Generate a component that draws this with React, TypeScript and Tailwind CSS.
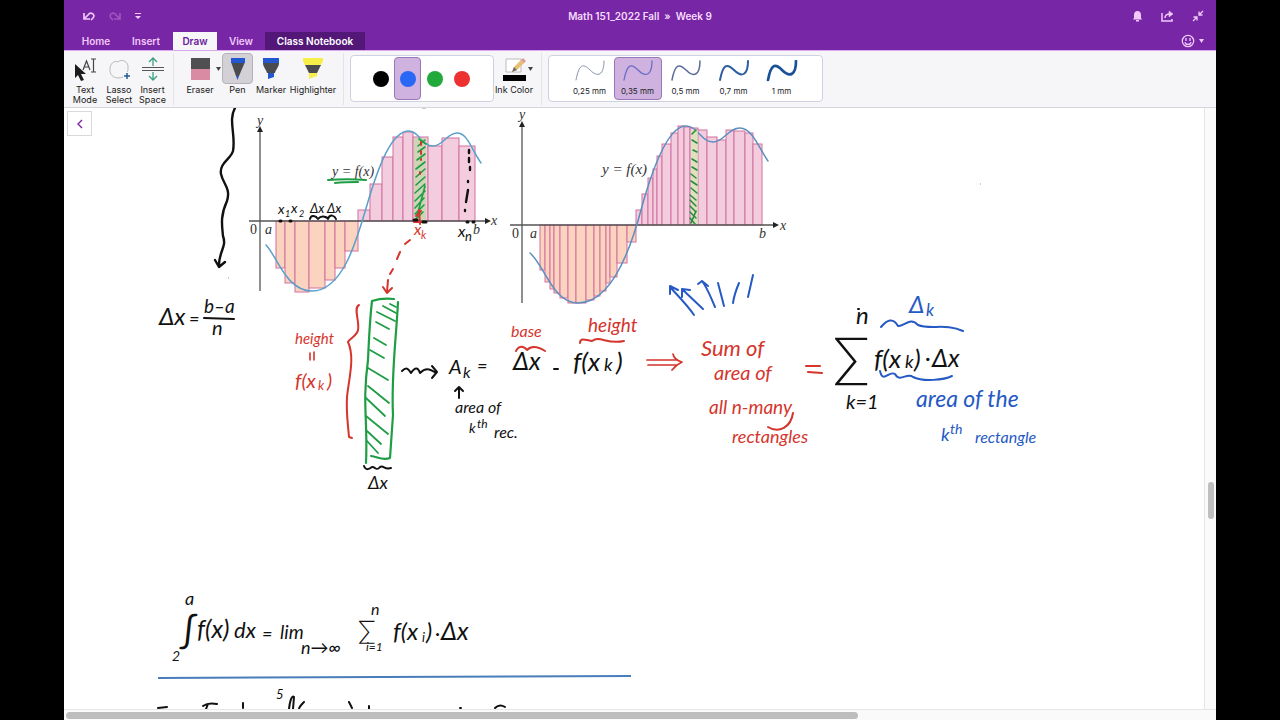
import { clsx } from "clsx";
import type { ReactNode } from "react";

const INK = { black: "#111111", red: "#d5352c", blue: "#2559c4", green: "#1f9d45" };

type Bar = [number, number, number];

// x start, x end, height at the sample point
const coarseBars: Bar[] = [
  [276, 285, 268], [285, 295, 283], [295, 309, 292], [309, 325, 288],
  [325, 335, 280], [335, 345, 268], [345, 358, 251], [358, 370, 210],
  [370, 382, 184], [382, 393, 157], [393, 403, 137], [403, 413, 132],
  [413, 428, 137], [428, 442, 146], [442, 459, 138], [459, 475, 146],
];

const fineBars: Bar[] = [
  [540, 545, 270], [545, 550, 282], [550, 554, 289], [554, 560, 293],
  [560, 568, 298], [568, 576, 303], [576, 586, 303], [586, 594, 300],
  [594, 600, 296], [600, 606, 291], [606, 610, 283], [610, 617, 277],
  [617, 627, 263], [627, 636, 242], [636, 642, 210], [642, 648, 194],
  [648, 653, 178], [653, 657, 169], [657, 662, 156], [662, 671, 144],
  [671, 678, 133], [678, 684, 126], [684, 690, 127], [690, 698, 128],
  [698, 707, 130], [707, 717, 137], [717, 726, 140], [726, 734, 130],
  [734, 745, 131], [745, 753, 133], [753, 762, 144],
];

const Bars = ({ bars, axis }: { bars: Bar[]; axis: number }) => (
  <g stroke="#d2709f" strokeWidth="1">
    {bars.map(([x1, x2, y]) => (
      <rect
        key={x1}
        x={x1}
        y={Math.min(y, axis)}
        width={x2 - x1}
        height={Math.abs(y - axis)}
        fill={y > axis ? "#fbd3bf" : "#f3cdde"}
      />
    ))}
  </g>
);

type HandProps = { x: number; y: number; size: number; color?: string; children: ReactNode };

const Hand = ({ x, y, size, color = INK.black, children }: HandProps) => (
  <text x={x} y={y} fontSize={size} fill={color} className="font-['Lato',sans-serif] italic">
    {children}
  </text>
);

const Label = ({ x, y, children }: { x: number; y: number; children: ReactNode }) => (
  <text x={x} y={y} fontSize="14" fill="#333" className="font-['Liberation_Serif',serif] italic">
    {children}
  </text>
);

const Stroke = ({ d, color = INK.black, width = 2 }: { d: string; color?: string; width?: number }) => (
  <path d={d} stroke={color} strokeWidth={width} fill="none" strokeLinecap="round" strokeLinejoin="round" />
);

const CoarseChart = () => (
  <g>
    <Bars bars={coarseBars} axis={221} />
    <path d="M260 291V128M249 221H488" stroke="#555" strokeWidth="1.3" />
    <path d="M260 126l-3 6h6zM491 221l-6-3v6z" fill="#222" />
    <Stroke d="M266 245C277 256 286 291 312 291C342 291 356 243 367 205C379 164 392 131 409 131C419 131 422 146 433 146C443 146 447 133 457 133C468 133 472 151 481 163" color="#5a9fca" width={1.5} />
    <Label x={257} y={125}>y</Label>
    <Label x={250} y={234}><tspan fontStyle="normal">0</tspan></Label>
    <Label x={265} y={234}>a</Label>
    <Label x={473} y={234}>b</Label>
    <Label x={491} y={225}>x</Label>
    <Label x={332} y={176}>y = f(x)</Label>
    <Stroke d="M328 180C341 179 353 179 366 180M335 183C344 182 351 182 358 182" color={INK.green} />
    <rect x="414" y="138" width="12" height="82" fill="#bcd8a5" opacity="0.7" />
    <Stroke d="M425 140l-7 6M425 147l-7 5M425 154l-8 6M425 162l-9 7M425 169l-9 8M425 177l-9 8M425 184l-10 9M425 191l-10 10M424 198l-9 10M424 205l-9 9M423 212l-7 7M419 139l7 5M425 186l-8 30" color={INK.green} width={1.6} />
    <Stroke d="M421 142v3M421 151v3M421 159v1M420 172v2M419 210l1 14M416 216l5 -5M414 222h9" color={INK.red} />
    <Stroke d="M469 150v3M469 158v4M470 167v3M468 181v1M468 190l-2 12M465 210v1" width={2.4} />
    <Stroke d="M280 221h1M290 221h1M414 220h3M423 222h3M467 222h1M473 222h1" width={3} />
    <Stroke d="M310 219C311 214 316 216 318 219C322 214 328 218 328 219C330 213 335 216 336 219" />
    <Hand x={278} y={214} size={14}>x</Hand>
    <Hand x={285} y={217} size={9}>1</Hand>
    <Hand x={291} y={213} size={14}>x</Hand>
    <Hand x={299} y={217} size={9}>2</Hand>
    <Hand x={310} y={213} size={13}>Δx</Hand>
    <Hand x={327} y={213} size={13}>Δx</Hand>
    <Hand x={458} y={237} size={16}>x</Hand>
    <Hand x={465} y={241} size={13}>n</Hand>
    <Hand x={414} y={235} size={16} color={INK.red}>x</Hand>
    <Hand x={421} y={239} size={11} color={INK.red}>k</Hand>
    <Stroke d="M410 240l-5 4M400 252l-3 7M393 269l-3 5M388 280l-1 12M383 287l4 6l5 -5" color={INK.red} />
  </g>
);

const FineChart = () => (
  <g>
    <Bars bars={fineBars} axis={225} />
    <path d="M522 303V124M510 225H776" stroke="#555" strokeWidth="1.3" />
    <path d="M522 121l-3 6h6zM779 225l-6-3v6z" fill="#222" />
    <Stroke d="M530 253C545 266 553 303 578 303C610 303 629 255 641 210C652 170 668 126 686 126C698 126 701 142 713 142C724 142 728 128 740 128C752 128 759 148 768 161" color="#5a8fc0" width={1.5} />
    <Label x={519} y={119}>y</Label>
    <Label x={512} y={238}><tspan fontStyle="normal">0</tspan></Label>
    <Label x={530} y={238}>a</Label>
    <Label x={759} y={238}>b</Label>
    <Label x={780} y={230}>x</Label>
    <text x="602" y="174" fontSize="15" fill="#333" className="font-['Liberation_Serif',serif] italic">y = f(x)</text>
    <rect x="691" y="130" width="7" height="94" fill="#d7e6b8" opacity="0.8" />
    <Stroke d="M696 130l-4 4M692 140l5 3M693 150l4 2M692 159l5 3M692 167l5 3M691 174l5 4M691 181l6 4M691 188l6 5M690 195l6 5M690 200l6 6M690 206l6 6M690 212l6 6M690 218l5 6M696 211l-5 12" color="#2a8b41" width={1.6} />
  </g>
);

const RectangleNotes = () => (
  <g>
    <Stroke d="M235 108C228 120 236 135 233 151C231 159 219 163 221 174C223 184 231 188 227 201C220 216 222 226 223 236C227 247 219 251 219 265M215 260l4 7l6 -5" width={2.4} />

    <Hand x={159} y={325} size={24}>Δx</Hand>
    <Hand x={189} y={325} size={18}>=</Hand>
    <Hand x={204} y={313} size={19}>b–a</Hand>
    <Hand x={212} y={335} size={20}>n</Hand>
    <Stroke d="M204 318L234 319" />

    <Hand x={295} y={344} size={15} color={INK.red}>height</Hand>
    <Stroke d="M310 353v7M314 352v8" color={INK.red} width={1.6} />
    <Hand x={295} y={388} size={20} color={INK.red}>f(x</Hand>
    <Hand x={318} y={390} size={13} color={INK.red}>k</Hand>
    <Hand x={327} y={388} size={20} color={INK.red}>)</Hand>
    <Stroke d="M359 305C353 308 360 322 358 330C357 336 350 338 348 342C355 357 349 378 347 397C346 413 348 424 349 437L352 438" color={INK.red} />

    <Stroke d="M366 463C368 420 362 405 368 360C369 337 370 318 372 301C378 299 386 298 394 299M398 302C396 341 391 377 393 415L390 458C383 461 378 457 371 456" color={INK.green} width={2.2} />
    <Stroke d="M390 304l6 3M383 306l13 7M377 312l18 9M376 322l13 7M374 338l12 7M370 350l14 8M368 368l20 12M368 386l21 17M366 398l19 18M366 416l22 18M367 431l14 13M367 441l11 12" color={INK.green} width={1.8} />
    <Stroke d="M364 466C366 471 369 469 372 467C375 466 376 472 380 467C384 465 384 470 391 468" />
    <Hand x={368} y={489} size={18}>Δx</Hand>

    <Stroke d="M402 371C406 367 408 368 411 373C415 367 418 367 420 373C425 368 429 368 436 373M432 366l5 6l-5 6" />
    <Hand x={449} y={374} size={20}>A</Hand>
    <Hand x={463} y={378} size={16}>k</Hand>
    <Hand x={477} y={372} size={18}>=</Hand>
    <Stroke d="M459 398V388M455 391l4 -4l4 4" />
    <Hand x={455} y={413} size={16}>area of</Hand>
    <Hand x={469} y={433} size={14}>k</Hand>
    <Hand x={477} y={428} size={12}>th</Hand>
    <Hand x={494} y={438} size={16}>rec.</Hand>

    <Hand x={511} y={337} size={16} color={INK.red}>base</Hand>
    <Stroke d="M516 351C519 345 524 346 527 350C531 346 537 346 545 351" color={INK.red} />
    <Hand x={513} y={370} size={25}>Δx</Hand>
    <Stroke d="M554 369h4" />
    <Hand x={588} y={332} size={19} color={INK.red}>height</Hand>
    <Stroke d="M580 343C580 337 586 340 592 341C600 335 607 345 624 341" color={INK.red} />
    <Hand x={573} y={371} size={26}>f(x</Hand>
    <Hand x={604} y={371} size={18}>k</Hand>
    <Hand x={616} y={371} size={26}>)</Hand>
    <Stroke d="M647 360H677M648 365H677M673 354C674 359 678 361 682 362C678 364 675 366 672 370" color={INK.red} width={1.7} />
  </g>
);

const SumNotes = () => (
  <g>
    <Stroke d="M694 315C688 306 680 298 670 287M670 294V286L678 290M703 309L683 290M682 297V289L690 290M715 307C711 298 708 289 702 281M698 284L702 281L708 286M724 306L718 283M733 303C734 296 736 290 739 283M748 297L753 275" color={INK.blue} />

    <Hand x={701} y={356} size={22} color={INK.red}>Sum of</Hand>
    <Hand x={714} y={380} size={20} color={INK.red}>area of</Hand>
    <Hand x={709} y={414} size={19} color={INK.red}>all n-many</Hand>
    <Hand x={732} y={443} size={18} color={INK.red}>rectangles</Hand>
    <Stroke d="M793 413C791 427 779 434 768 427" color={INK.red} />
    <Stroke d="M806 366L820 366M808 372L822 373" color={INK.red} />

    <Hand x={856} y={324} size={24}>n</Hand>
    <Stroke d="M858 309h1" />
    <text x="833" y="376" fontSize="54" fill={INK.black} className="font-['Lato',sans-serif] font-light">∑</text>
    <Hand x={846} y={409} size={20}>k=1</Hand>
    <Hand x={874} y={368} size={26}>f(x</Hand>
    <Hand x={905} y={368} size={18}>k</Hand>
    <Hand x={914} y={368} size={26}>)</Hand>
    <Hand x={925} y={366} size={22}>·</Hand>
    <Hand x={932} y={367} size={25}>Δx</Hand>
    <Hand x={909} y={313} size={24} color={INK.blue}>Δ</Hand>
    <Hand x={926} y={316} size={17} color={INK.blue}>k</Hand>
    <Stroke d="M881 327C887 320 893 317 898 326C904 327 910 316 918 325C930 330 946 323 963 331M880 371C883 384 889 370 895 374C900 383 907 372 913 377C923 382 944 380 952 376" color={INK.blue} />
    <Hand x={916} y={407} size={23} color={INK.blue}>area of the</Hand>
    <Hand x={941} y={441} size={18} color={INK.blue}>k</Hand>
    <Hand x={950} y={434} size={14} color={INK.blue}>th</Hand>
    <Hand x={975} y={443} size={16} color={INK.blue}>rectangle</Hand>
  </g>
);

const IntegralNotes = () => (
  <g>
    <Hand x={185} y={605} size={18}>a</Hand>
    <Hand x={172} y={661} size={14}>2</Hand>
    <Hand x={181} y={643} size={36}>∫</Hand>
    <Hand x={197} y={638} size={25}>f(x)</Hand>
    <Hand x={234} y={638} size={22}>dx</Hand>
    <Hand x={262} y={640} size={18}>=</Hand>
    <Hand x={280} y={639} size={19}>lim</Hand>
    <Hand x={301} y={654} size={18}>n→∞</Hand>
    <Hand x={371} y={615} size={16}>n</Hand>
    <text x="358" y="639" fontSize="26" fill={INK.black} className="font-['Lato',sans-serif] font-light">∑</text>
    <Hand x={366} y={651} size={12}>i=1</Hand>
    <Hand x={393} y={640} size={24}>f(x</Hand>
    <Hand x={422} y={642} size={13}>i</Hand>
    <Hand x={426} y={640} size={24}>)</Hand>
    <Hand x={435} y={640} size={20}>·</Hand>
    <Hand x={441} y={640} size={25}>Δx</Hand>
    <path d="M158 678L631 676" stroke="#4a7dbb" strokeWidth="2" />
    <Hand x={276} y={699} size={13}>5</Hand>
    <Stroke d="M158 708l9 -1M203 706C207 703 212 703 217 704M206 709l2 -5M243 703v5M289 709C290 700 292 695 294 697L293 709M304 702C301 705 299 707 299 709M349 702L352 708M369 706v3M460 708h1M495 708C498 705 502 705 505 707" />
  </g>
);

const tabs = [
  { name: "Home", className: "w-[44px]" },
  { name: "Insert", className: "ml-1.5 w-[44px]" },
  { name: "Draw", className: "ml-[5px] w-[44px] bg-[#f6f5f7] text-[#6a1b9a]" },
  { name: "View", className: "w-[48px]" },
  { name: "Class Notebook", className: "w-[100px] bg-[#531778] text-white" },
];

const swatches = [
  { name: "Black", color: "bg-black" },
  { name: "Blue", color: "bg-[#2b67f5]", active: true },
  { name: "Green", color: "bg-[#22a93c]" },
  { name: "Red", color: "bg-[#ed3030]" },
];

const widths = [
  { label: "0,25 mm", stroke: 1, color: "#8792ab" },
  { label: "0,35 mm", stroke: 1.3, color: "#6a6cc8", active: true },
  { label: "0,5 mm", stroke: 1.5, color: "#5b6a9b" },
  { label: "0,7 mm", stroke: 2, color: "#2c5da0" },
  { label: "1 mm", stroke: 2.7, color: "#1c5199" },
];

const Tool = ({ label, className, active, children }: { label: ReactNode; className: string; active?: boolean; children: ReactNode }) => (
  <button className={clsx("flex shrink-0 flex-col items-center gap-px text-[9px] leading-[10px] text-[#222]", className)}>
    <span className={clsx("flex h-[31px] w-[31px] items-center justify-center rounded-sm border", active ? "border-[#b5b3b8] bg-[#d3d1d6]" : "border-transparent")}>
      {children}
    </span>
    <span className="whitespace-nowrap">{label}</span>
  </button>
);

const Divider = () => <div className="h-[52px] w-px shrink-0 bg-[#e4e3e6]" />;

const Caret = ({ className }: { className?: string }) => (
  <svg width="5" height="4" viewBox="0 0 5 4" fill="currentColor" className={className}><path d="M0 0h5L2.5 4z" /></svg>
);

const Header = () => (
  <header className="flex h-[50px] shrink-0 flex-col bg-[#7726a5] text-[#f1c9fb]">
    <div className="grid h-8 grid-cols-3 items-center">
      <div className="flex items-center gap-3 pl-[18px]">
        <button aria-label="Undo">
          <svg width="14" height="12" viewBox="0 0 14 12" fill="none" stroke="currentColor" strokeWidth="1.7"><path d="M2 3v6h6M2 9L6 5C9 1 14 5 11 8L9 10" /></svg>
        </button>
        <button aria-label="Redo" className="text-[#9c56bf]">
          <svg width="14" height="12" viewBox="0 0 14 12" fill="none" stroke="currentColor" strokeWidth="1.7"><path d="M12 3v6H6M12 9L8 5C5 1 0 5 3 8L5 10" /></svg>
        </button>
        <button aria-label="Customize toolbar">
          <svg width="8" height="7" viewBox="0 0 8 7" fill="currentColor"><path d="M1 0h6v1H1zM1 3h6L4 6z" /></svg>
        </button>
      </div>
      <h1 className="text-center text-[10px] font-semibold whitespace-pre text-[#f6dcfc]">Math 151_2022 Fall  »  Week 9</h1>
      <div className="flex items-center justify-end gap-[18px] pr-3">
        <button aria-label="Notifications">
          <svg width="11" height="12" viewBox="0 0 11 12" fill="currentColor"><path d="M5.5 1C3 1 2 3 2 5v3L.8 9.5h9.4L9 8V5C9 3 8 1 5.5 1zM4 10h3v1.5H4z" /></svg>
        </button>
        <button aria-label="Share">
          <svg width="13" height="12" viewBox="0 0 13 12" fill="none" stroke="currentColor" strokeWidth="1.5"><path d="M1 3v8h10V9M4 8c0-3 2-4 5-4" /><path d="M8 1l4 3-4 3z" fill="currentColor" strokeWidth="0.5" /></svg>
        </button>
        <button aria-label="Exit full screen">
          <svg width="12" height="12" viewBox="0 0 12 12" fill="none" stroke="currentColor" strokeWidth="1.3"><path d="M11 1L7 5M7 1.5V5h3.5M1 11l4-4M1.5 7H5v3.5" /></svg>
        </button>
      </div>
    </div>
    <div className="flex h-[18px] items-stretch">
      <nav className="flex pl-2.5 text-[10px] font-semibold">
        {tabs.map((tab) => (
          <button key={tab.name} className={clsx("whitespace-nowrap", tab.className)}>{tab.name}</button>
        ))}
      </nav>
      <button aria-label="Feedback" className="mr-3 ml-auto flex items-center gap-1">
        <svg width="14" height="14" viewBox="0 0 14 14" fill="none" stroke="currentColor" strokeWidth="1.3"><circle cx="7" cy="7" r="5.7" /><path d="M5 4v3M9 4v3M3.8 8.2c1 3 5.4 3 6.4 0" /></svg>
        <Caret />
      </button>
    </div>
  </header>
);

const Ribbon = () => (
  <div className="flex h-[58px] shrink-0 overflow-hidden border-t border-b border-t-[#dba8ee] border-b-[#d6d5d8] bg-[#f6f5f7] pt-0.5">
    <div className="flex pr-1 pl-1">
      <Tool label={<>Text<br />Mode</>} className="w-[34px]">
        <svg width="24" height="26" viewBox="0 0 24 26" className="shrink-0">
          <path d="M2 8v14l3-3 3 6 3-1-3-6h5z" fill="#1c1c1c" />
          <path d="M10 14l3.5-9L17 14M11.5 11h4M18 3h5M20.5 3v13M18 16h5" fill="none" stroke="#444" strokeWidth="1.2" />
        </svg>
      </Tool>
      <Tool label={<>Lasso<br />Select</>} className="w-[34px]">
        <svg width="24" height="26" viewBox="0 0 24 26" fill="none" className="shrink-0">
          <path d="M16 21C9 24 2 20 3 13C3 8 7 4 11 6C15 2 22 6 21 12C21 14 21 15 20 16" stroke="#b9b9bc" />
          <path d="M20 17v6M17 20h6" stroke="#245c96" strokeWidth="1.5" />
        </svg>
      </Tool>
      <Tool label={<>Insert<br />Space</>} className="w-[33px]">
        <svg width="22" height="26" viewBox="0 0 22 26" fill="none" className="shrink-0">
          <path d="M0 11.5h22M0 14.5h22" stroke="#555" />
          <path d="M11 10V2M7 6l4-4 4 4M11 16v8M7 20l4 4 4-4" stroke="#3ca180" strokeWidth="1.3" />
        </svg>
      </Tool>
    </div>
    <Divider />
    <div className="flex pl-2.5">
      <Tool label="Eraser" className="w-[32px]">
        <svg width="19" height="22" viewBox="0 0 19 22" className="shrink-0"><path fill="#505052" d="M0 0h19v11H0z" /><path fill="#d88ba2" d="M0 11h19v11H0z" /></svg>
      </Tool>
      <Caret className="mt-3.5 shrink-0 text-[#444]" />
      <Tool label="Pen" active className="ml-px w-[31px]">
        <svg width="16" height="22" viewBox="0 0 16 22" className="shrink-0"><path d="M1 4L6 18h3l6-14z" fill="#4a4b4e" /><path d="M1 0h14v5H1zM6 18l1.5 4L9 18z" fill="#2357cf" /></svg>
      </Tool>
      <Tool label="Marker" className="w-[36px]">
        <svg width="16" height="22" viewBox="0 0 16 22" className="shrink-0"><path d="M0 0h16v5H0z" fill="#2357cf" /><path d="M0 5h16c0 4-3 6-4 10H4C3 11 0 9 0 5z" fill="#4a4b4e" /><path d="M5 15h6v4l-6 2z" fill="#2357cf" /></svg>
      </Tool>
      <Tool label="Highlighter" className="mr-1.5 w-[48px]">
        <svg width="20" height="22" viewBox="0 0 20 22" className="shrink-0"><path d="M0 0h20v3l-2 4H2L0 3z" fill="#f7ee4a" /><path d="M2 7h16l-4 8H6z" fill="#4a4b4e" /><path d="M6 15h8v3l-8 3z" fill="#f7ee4a" /></svg>
      </Tool>
    </div>
    <Divider />
    <div className="mx-1.5 mt-0.5 flex h-[47px] w-[144px] shrink-0 items-center justify-center self-start rounded-sm border border-[#cfd0e0] bg-white pr-0.5">
      {swatches.map((swatch) => (
        <button
          key={swatch.name}
          aria-label={swatch.name}
          className={clsx("flex h-[43px] w-[27px] items-center justify-center rounded-sm border", swatch.active ? "border-[#9a78b8] bg-[#cfb2df]" : "border-transparent")}
        >
          <span className={clsx("h-4 w-4 rounded-full", swatch.color)} />
        </button>
      ))}
    </div>
    <Tool label="Ink Color" className="w-[28px]">
      <svg width="23" height="24" viewBox="0 0 23 24" className="shrink-0">
        <path d="M3 2h15v13H3z" fill="#fff" stroke="#bbb" />
        <path d="M9 15l2-5 8-8 3 3-8 8z" fill="#e5bf72" /><path d="M9 15l2-5 3 3z" fill="#6c6b6b" /><path d="M18 3l2-2 3 3-2 2z" fill="#d99c9b" />
        <path d="M0 18h23v6H0z" />
      </svg>
    </Tool>
    <Caret className="mt-3.5 mr-2 shrink-0 text-[#444]" />
    <Divider />
    <div className="mt-0.5 ml-1.5 flex h-[47px] w-[275px] shrink-0 items-center justify-center self-start rounded-sm border border-[#cfd0e0] bg-white">
      {widths.map((w) => (
        <button
          key={w.label}
          className={clsx("flex h-[43px] w-[48px] flex-col items-center justify-between rounded-sm border py-0.5 text-[8px] leading-[11px] text-[#222]", w.active ? "border-[#9a78b8] bg-[#cfb2df]" : "border-transparent")}
        >
          <svg width="32" height="22" viewBox="0 0 32 22" fill="none" stroke={w.color} strokeWidth={w.stroke} strokeLinecap="round">
            <path d="M2 20C5 4 9 3 16 10C24 18 30 15 30 1" />
          </svg>
          <span className="whitespace-nowrap">{w.label}</span>
        </button>
      ))}
    </div>
  </div>
);

const App = () => {
  return (
    <div className="h-screen bg-black px-16 font-['Inter',sans-serif]">
      <div className="flex h-full flex-col overflow-hidden bg-white">
        <Header />
        <Ribbon />
        <div className="flex min-h-0 flex-1">
          <main className="relative min-w-0 flex-1 overflow-hidden">
            <svg width="1140" height="601" viewBox="64 108 1140 601" role="img" aria-label="Riemann sum notes" className="max-w-none">
              <CoarseChart />
              <FineChart />
              <RectangleNotes />
              <SumNotes />
              <IntegralNotes />
              <path d="M980 184h1M228 278h1M422 108h4" stroke="#999" />
            </svg>
            <button aria-label="Show navigation" className="absolute top-[3px] left-[3px] flex h-[25px] w-[25px] items-center justify-center border border-[#d9d9dc] bg-white text-[#7726a5]">
              <svg width="6" height="10" viewBox="0 0 6 10" fill="none" stroke="currentColor" strokeWidth="1.4"><path d="M5 1L1 5l4 4" /></svg>
            </button>
          </main>
          <div className="flex w-3 shrink-0 flex-col items-center border-l border-[#e6e6e6] bg-[#fafafa]">
            <div className="flex-[374]" />
            <div className="h-[37px] w-1.5 rounded-full bg-[#bfbfbf]" />
            <div className="flex-[190]" />
          </div>
        </div>
        <div className="flex h-[11px] shrink-0 items-center border-t border-[#e6e6e6] bg-[#fafafa] px-0.5">
          <div className="h-[7px] w-[69%] rounded-full bg-[#bdbdbd]" />
        </div>
      </div>
    </div>
  );
};

export default App;
